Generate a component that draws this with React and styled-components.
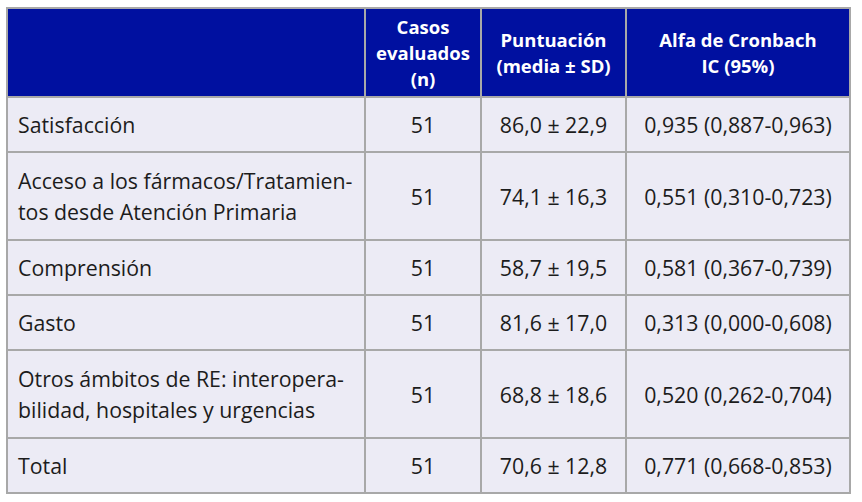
import styled, { createGlobalStyle } from "styled-components";

const GlobalStyle = createGlobalStyle`
  html, body {
    margin: 0;
    padding: 0;
    background: #ffffff;
  }
  body {
    font-family: "Open Sans", "Noto Sans", "Liberation Sans", sans-serif;
  }
`;

const Page = styled.div`
  padding: 7px 0 0 6px;
`;

const Table = styled.table`
  width: 843px;
  table-layout: fixed;
  border-collapse: collapse;
  border: 2px solid #a8a8a8;
`;

const HeadRow = styled.tr`
  height: 89px;
  background: #0010a0;
`;

const Row = styled.tr`
  height: ${(p) => (p.$double ? "88px" : "55px")};
  background: #ecebf5;
`;

const HeadCell = styled.th`
  border: 2px solid #a8a8a8;
  padding: 0 6px;
  color: #ffffff;
  font-size: 18.5px;
  font-weight: 700;
  line-height: 26px;
  text-align: center;
  vertical-align: middle;
`;

const Cell = styled.td`
  border: 2px solid #a8a8a8;
  padding: 0 ${(p) => (p.$label ? "10px" : "4px")};
  color: #1c1c1c;
  font-size: 21.3px;
  font-weight: 400;
  line-height: 31px;
  text-align: ${(p) => (p.$label ? "left" : "center")};
  vertical-align: middle;
  white-space: nowrap;
`;

const rows = [
  { label: ["Satisfacción"], n: 51, score: "86,0 ± 22,9", alpha: "0,935 (0,887-0,963)" },
  {
    label: ["Acceso a los fármacos/Tratamien-", "tos desde Atención Primaria"],
    n: 51,
    score: "74,1 ± 16,3",
    alpha: "0,551 (0,310-0,723)",
  },
  { label: ["Comprensión"], n: 51, score: "58,7 ± 19,5", alpha: "0,581 (0,367-0,739)" },
  { label: ["Gasto"], n: 51, score: "81,6 ± 17,0", alpha: "0,313 (0,000-0,608)" },
  {
    label: ["Otros ámbitos de RE: interopera-", "bilidad, hospitales y urgencias"],
    n: 51,
    score: "68,8 ± 18,6",
    alpha: "0,520 (0,262-0,704)",
  },
  { label: ["Total"], n: 51, score: "70,6 ± 12,8", alpha: "0,771 (0,668-0,853)" },
];

export default function App() {
  return (
    <>
      <GlobalStyle />
      <Page>
        <Table>
          <colgroup>
            <col style={{ width: 358 }} />
            <col style={{ width: 116 }} />
            <col style={{ width: 145 }} />
            <col style={{ width: 224 }} />
          </colgroup>
          <thead>
            <HeadRow>
              <HeadCell />
              <HeadCell>
                Casos
                <br />
                evaluados
                <br />
                (n)
              </HeadCell>
              <HeadCell>
                Puntuación
                <br />
                (media ± SD)
              </HeadCell>
              <HeadCell>
                Alfa de Cronbach
                <br />
                IC (95%)
              </HeadCell>
            </HeadRow>
          </thead>
          <tbody>
            {rows.map((r) => (
              <Row key={r.label[0]} $double={r.label.length > 1}>
                <Cell $label>
                  {r.label.map((line, i) => (
                    <span key={i}>
                      {i > 0 && <br />}
                      {line}
                    </span>
                  ))}
                </Cell>
                <Cell>{r.n}</Cell>
                <Cell>{r.score}</Cell>
                <Cell>{r.alpha}</Cell>
              </Row>
            ))}
          </tbody>
        </Table>
      </Page>
    </>
  );
}
